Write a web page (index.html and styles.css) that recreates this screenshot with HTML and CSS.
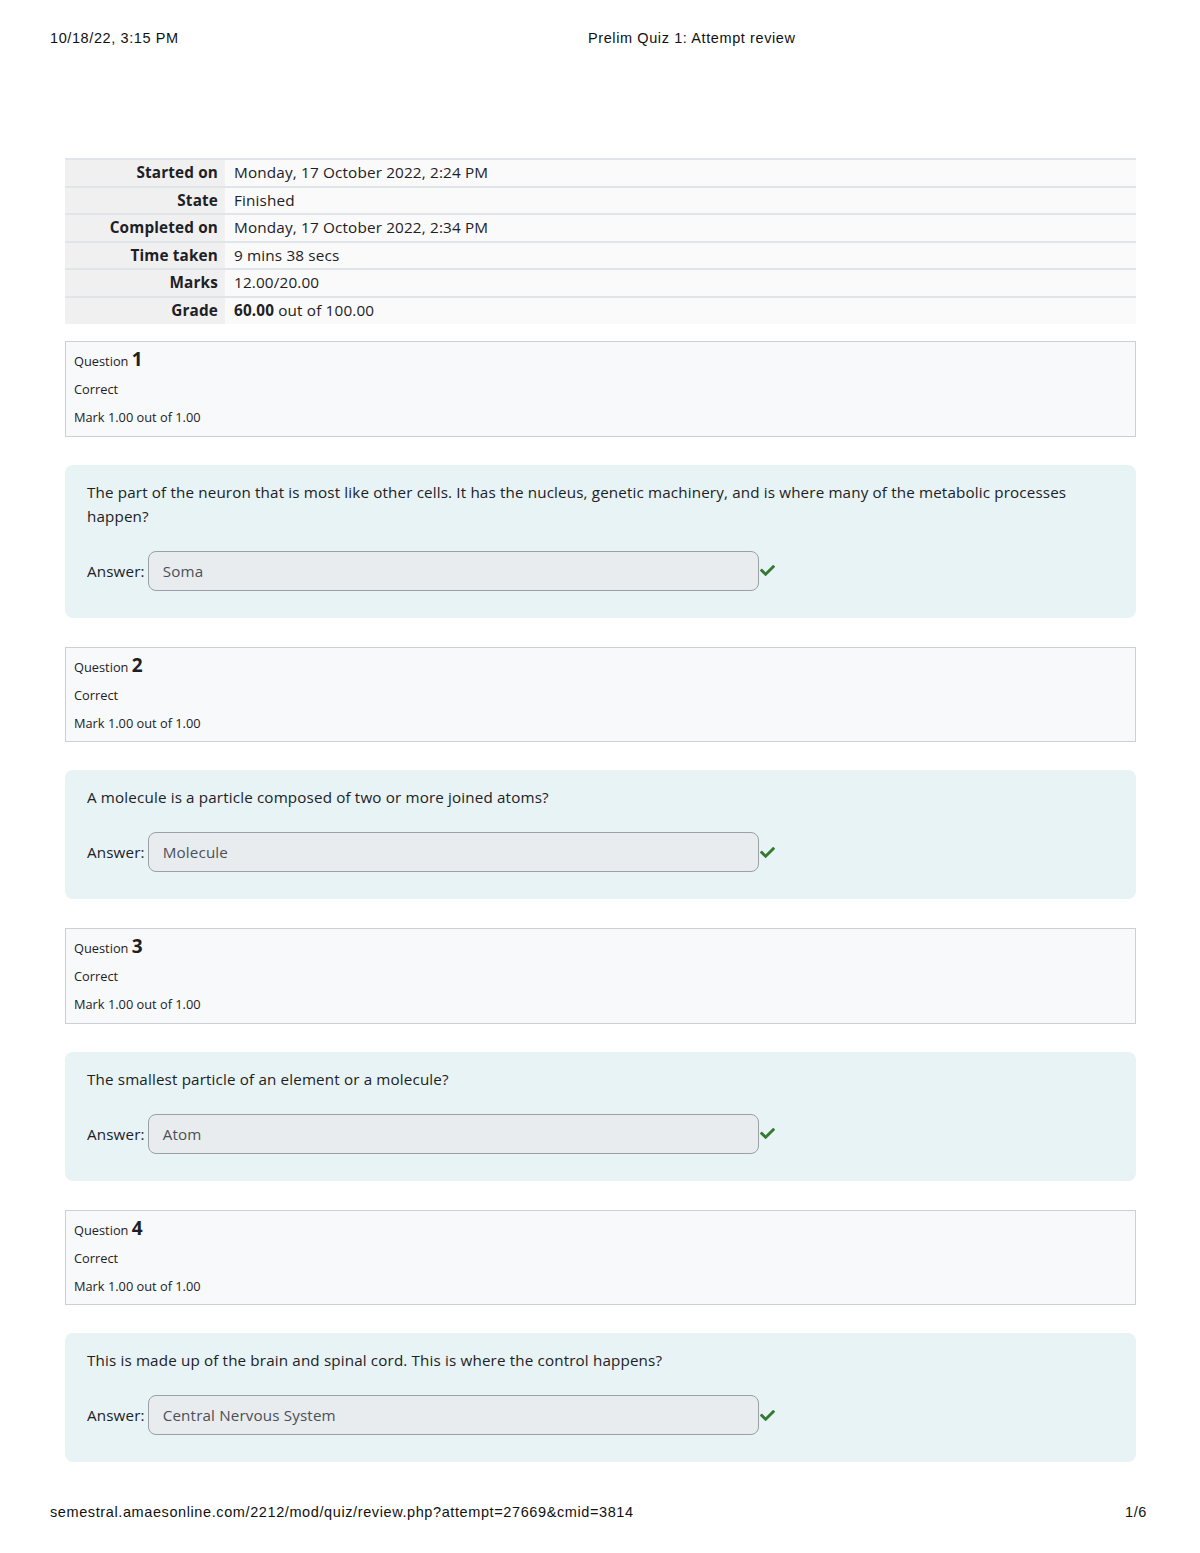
FILE: index.html
```html
<!DOCTYPE html>
<html lang="en">
<head>
  <meta charset="UTF-8" />
  <meta name="viewport" content="width=device-width, initial-scale=1.0">
  <title>Prelim Quiz 1: Attempt review</title>

  <link rel="stylesheet" href="styles.css">
</head>
<body>
  <header class="print-header">
    <span class="print-date">10/18/22, 3:15 PM</span>
    <span class="print-title">Prelim Quiz 1: Attempt review</span>
  </header>

  <main class="page">
    <table class="summary">
      <tr><th>Started on</th><td>Monday, 17 October 2022, 2:24 PM</td></tr>
      <tr><th>State</th><td>Finished</td></tr>
      <tr><th>Completed on</th><td>Monday, 17 October 2022, 2:34 PM</td></tr>
      <tr><th>Time taken</th><td>9 mins 38 secs</td></tr>
      <tr><th>Marks</th><td>12.00/20.00</td></tr>
      <tr><th>Grade</th><td><b>60.00</b> out of 100.00</td></tr>
    </table>

    <section class="que">
      <div class="que-info">
        <div class="qno">Question <span>1</span></div>
        <div>Correct</div>
        <div>Mark 1.00 out of 1.00</div>
      </div>
      <div class="que-content">
        <p class="qtext">The part of the neuron that is most like other cells. It has the nucleus, genetic machinery, and is where many of the metabolic processes happen?</p>
        <div class="answer">
          <label>Answer:</label>
          <div class="answer-box">Soma</div>
          <svg class="tick" viewBox="0 0 512 512"><path d="M173.9 439.4L7.5 273c-10-10-10-26.2 0-36.2l36.2-36.2c10-10 26.2-10 36.2 0L192 312.7 432.1 72.6c10-10 26.2-10 36.2 0l36.2 36.2c10 10 10 26.2 0 36.2L210.1 439.4c-10 10-26.2 10-36.2 0z"/></svg>
        </div>
      </div>
    </section>

    <section class="que">
      <div class="que-info">
        <div class="qno">Question <span>2</span></div>
        <div>Correct</div>
        <div>Mark 1.00 out of 1.00</div>
      </div>
      <div class="que-content">
        <p class="qtext">A molecule is a particle composed of two or more joined atoms?</p>
        <div class="answer">
          <label>Answer:</label>
          <div class="answer-box">Molecule</div>
          <svg class="tick" viewBox="0 0 512 512"><path d="M173.9 439.4L7.5 273c-10-10-10-26.2 0-36.2l36.2-36.2c10-10 26.2-10 36.2 0L192 312.7 432.1 72.6c10-10 26.2-10 36.2 0l36.2 36.2c10 10 10 26.2 0 36.2L210.1 439.4c-10 10-26.2 10-36.2 0z"/></svg>
        </div>
      </div>
    </section>

    <section class="que">
      <div class="que-info">
        <div class="qno">Question <span>3</span></div>
        <div>Correct</div>
        <div>Mark 1.00 out of 1.00</div>
      </div>
      <div class="que-content">
        <p class="qtext">The smallest particle of an element or a molecule?</p>
        <div class="answer">
          <label>Answer:</label>
          <div class="answer-box">Atom</div>
          <svg class="tick" viewBox="0 0 512 512"><path d="M173.9 439.4L7.5 273c-10-10-10-26.2 0-36.2l36.2-36.2c10-10 26.2-10 36.2 0L192 312.7 432.1 72.6c10-10 26.2-10 36.2 0l36.2 36.2c10 10 10 26.2 0 36.2L210.1 439.4c-10 10-26.2 10-36.2 0z"/></svg>
        </div>
      </div>
    </section>

    <section class="que">
      <div class="que-info">
        <div class="qno">Question <span>4</span></div>
        <div>Correct</div>
        <div>Mark 1.00 out of 1.00</div>
      </div>
      <div class="que-content">
        <p class="qtext">This is made up of the brain and spinal cord. This is where the control happens?</p>
        <div class="answer">
          <label>Answer:</label>
          <div class="answer-box">Central Nervous System</div>
          <svg class="tick" viewBox="0 0 512 512"><path d="M173.9 439.4L7.5 273c-10-10-10-26.2 0-36.2l36.2-36.2c10-10 26.2-10 36.2 0L192 312.7 432.1 72.6c10-10 26.2-10 36.2 0l36.2 36.2c10 10 10 26.2 0 36.2L210.1 439.4c-10 10-26.2 10-36.2 0z"/></svg>
        </div>
      </div>
    </section>
  </main>

  <footer class="print-footer">
    <span>semestral.amaesonline.com/2212/mod/quiz/review.php?attempt=27669&amp;cmid=3814</span>
    <span>1/6</span>
  </footer>
</body>
</html>
```

FILE: styles.css
```css
* {
  box-sizing: border-box;
  margin: 0;
  padding: 0;
}

body {
  width: 1200px;
  min-height: 1553px;
  display: flex;
  flex-direction: column;
  background-color: #fff;
  color: #1d2125;
  font-family: "Open Sans", "Noto Sans", sans-serif;
}

/* Print header / footer */
.print-header,
.print-footer {
  display: flex;
  font-family: "Liberation Sans", Arial, sans-serif;
  font-size: 14.5px;
  letter-spacing: 0.6px;
  color: #111;
  padding: 0 53px 0 50px;
}

.print-header {
  padding-top: 30px;
  height: 158px;
}

.print-date {
  width: 538px;
}

.print-footer {
  justify-content: space-between;
  margin-top: auto;
  height: 53px;
  padding-top: 4px;
}

.page {
  padding: 0 64px 0 65px;
}

/* Summary table */
.summary {
  width: 100%;
  border-collapse: collapse;
  font-size: 15.3px;
  letter-spacing: 0.15px;
  margin-bottom: 17px;
}

.summary th,
.summary td {
  border-top: 2px solid #e1e5e9;
  padding: 3px 8px 3px 9px;
  line-height: 19.5px;
  vertical-align: middle;
}

.summary th {
  width: 160px;
  text-align: right;
  background-color: #f0f0f0;
  padding-right: 7px;
  font-weight: 700;
  white-space: nowrap;
}

.summary td {
  background-color: #fafafa;
}

.summary tr:last-child th,
.summary tr:last-child td {
  padding-bottom: 4px;
}

/* Questions */
.que {
  margin-bottom: 29px;
}

.que-info {
  background-color: #f8f9fa;
  border: 1px solid #cbd0d6;
  padding: 5px 8px 4.5px;
  font-size: 12.8px;
  line-height: 28px;
  margin-bottom: 28px;
}

.qno {
  height: 28px;
}

.qno span {
  font-size: 19px;
  font-weight: 700;
  line-height: 1;
}

.que-content {
  background-color: #e7f3f5;
  border-radius: 8px;
  padding: 15px 22px 27px;
}

.qtext {
  font-size: 15.2px;
  letter-spacing: 0.15px;
  line-height: 24px;
  margin-bottom: 23px;
}

.answer {
  display: flex;
  align-items: center;
  font-size: 15.2px;
  letter-spacing: 0.15px;
}

.answer label {
  margin-right: 3px;
}

.answer-box {
  width: 611px;
  height: 40px;
  line-height: 38px;
  padding-left: 14px;
  background-color: #e9ecef;
  border: 1px solid #9aa0a6;
  border-radius: 8px;
  color: #495057;
}

.tick {
  width: 15px;
  height: 15px;
  margin-left: 1px;
  fill: #357a32;
}
```
